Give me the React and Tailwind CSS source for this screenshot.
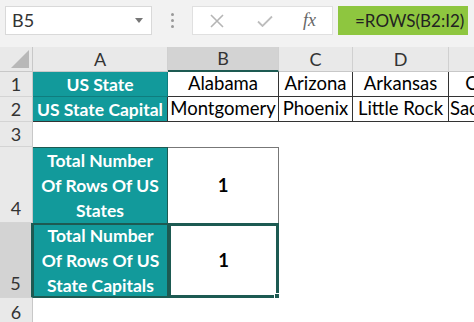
const COLS = ["A", "B", "C", "D", "E"];

function ColHead({ label, active }) {
  return (
    <div
      className={
        "flex items-center justify-center border-r border-[#d0d0d0] text-[18px] text-[#333] " +
        (active
          ? "bg-[#d3d3d3] border-b-2 border-b-[#1d5a52]"
          : "bg-[#e9e9e9] border-b border-b-[#c8c8c8]")
      }
    >
      {label}
    </div>
  );
}

function RowHead({ n, active, bottom }) {
  return (
    <div
      className={
        "flex justify-center border-b border-[#d4d4d4] text-[18px] text-[#333] " +
        (bottom ? "items-end " : "items-center ") +
        (active
          ? "bg-[#d3d3d3] border-r-2 border-r-[#1d5a52]"
          : "bg-[#e9e9e9] border-r border-r-[#c8c8c8]")
      }
    >
      {n}
    </div>
  );
}

function Data({ children, className = "" }) {
  return (
    <div
      className={
        "flex items-center justify-center overflow-hidden whitespace-nowrap text-[18.5px] text-black " +
        className
      }
    >
      {children}
    </div>
  );
}

function Teal({ children, className = "" }) {
  return (
    <div
      className={
        "flex items-center justify-center bg-[#129a9b] text-center font-bold text-[17.5px] leading-[25px] text-white " +
        className
      }
    >
      {children}
    </div>
  );
}

function FormulaBar() {
  return (
    <div className="flex h-[47px] items-start pt-[6px] pl-[5px]">
      <div className="flex h-[29px] w-[147px] items-center justify-between border border-[#d9d9d9] bg-white pl-[6px] pr-[8px] text-[18px] text-[#333]">
        <span>B5</span>
        <svg width="8" height="5" viewBox="0 0 8 5">
          <path d="M0 0h8L4 5z" fill="#777" />
        </svg>
      </div>
      <div className="flex h-[29px] w-[40px] flex-col items-center justify-center gap-[3px]">
        <span className="h-[3px] w-[3px] rounded-full bg-[#999]" />
        <span className="h-[3px] w-[3px] rounded-full bg-[#999]" />
        <span className="h-[3px] w-[3px] rounded-full bg-[#999]" />
      </div>
      <div className="flex h-[29px] w-[141px] items-center border border-[#e0e0e0] bg-white">
        <svg className="ml-[17px]" width="14" height="14" viewBox="0 0 14 14">
          <path d="M1 1L13 13M13 1L1 13" stroke="#b5b5b5" strokeWidth="1.6" />
        </svg>
        <svg className="ml-[33px]" width="16" height="12" viewBox="0 0 16 12">
          <path d="M1 6.5L5.5 11L15 1.5" stroke="#bdbdbd" strokeWidth="1.8" fill="none" />
        </svg>
        <span className="ml-[30px] font-['Liberation_Serif'] text-[18px] italic text-[#666]">
          fx
        </span>
      </div>
      <div className="ml-[5px] flex h-[29px] w-[130px] items-center whitespace-nowrap bg-[#8ec63f] pl-[17px] text-[17px] text-[#222]">
        =ROWS(B2:I2)
      </div>
    </div>
  );
}

export default function App() {
  return (
    <div className="h-[322px] w-[474px] overflow-hidden bg-[#f2f2f2] font-['Lato',sans-serif]">
      <FormulaBar />
      <div className="grid grid-cols-[33px_135px_111px_74px_96px_110px] grid-rows-[25px_25px_25px_25px_76px_75px_30px] bg-white">
        <div className="relative border-r border-b border-[#c8c8c8] bg-[#e9e9e9]">
          <svg className="absolute right-[3px] bottom-[3px]" width="18" height="18" viewBox="0 0 18 18">
            <path d="M18 0V18H0z" fill="#b8b8b8" />
          </svg>
        </div>
        {COLS.map((c) => (
          <ColHead key={c} label={c} active={c === "B"} />
        ))}

        <RowHead n="1" />
        <Teal className="border-r border-b border-[#0f7d7e]">US State</Teal>
        <Data className="border-r border-b border-[#333]">Alabama</Data>
        <Data className="border-r border-b border-[#333]">Arizona</Data>
        <Data className="border-r border-b border-[#333]">Arkansas</Data>
        <Data className="border-b border-[#333]">California</Data>

        <RowHead n="2" />
        <Teal className="border-r border-b border-[#333]">US State Capital</Teal>
        <Data className="border-r border-b border-[#333]">Montgomery</Data>
        <Data className="border-r border-b border-[#333]">Phoenix</Data>
        <Data className="border-r border-b border-[#333]">Little Rock</Data>
        <Data className="justify-start border-b border-[#333] pl-[1px]">Sacramento</Data>

        <RowHead n="3" />
        <div />
        <div />
        <div />
        <div />
        <div />

        <RowHead n="4" bottom />
        <Teal className="border-t border-r border-[#1d5a52]">
          Total Number
          <br />
          Of Rows Of US
          <br />
          States
        </Teal>
        <Data className="border-t border-r border-[#777] font-bold">1</Data>
        <div />
        <div />
        <div />

        <RowHead n="5" active bottom />
        <Teal className="border-y-2 border-l border-r border-[#1d5a52]">
          Total Number
          <br />
          Of Rows Of US
          <br />
          State Capitals
        </Teal>
        <div className="relative flex items-center justify-center border-[3px] border-[#1d5a52] text-[18.5px] font-bold text-black">
          1
          <span className="absolute right-[-4px] bottom-[-4px] h-[6px] w-[6px] border border-white bg-[#1d5a52]" />
        </div>
        <div />
        <div />
        <div />

        <RowHead n="6" />
        <div />
        <div />
        <div />
        <div />
        <div />
      </div>
    </div>
  );
}
